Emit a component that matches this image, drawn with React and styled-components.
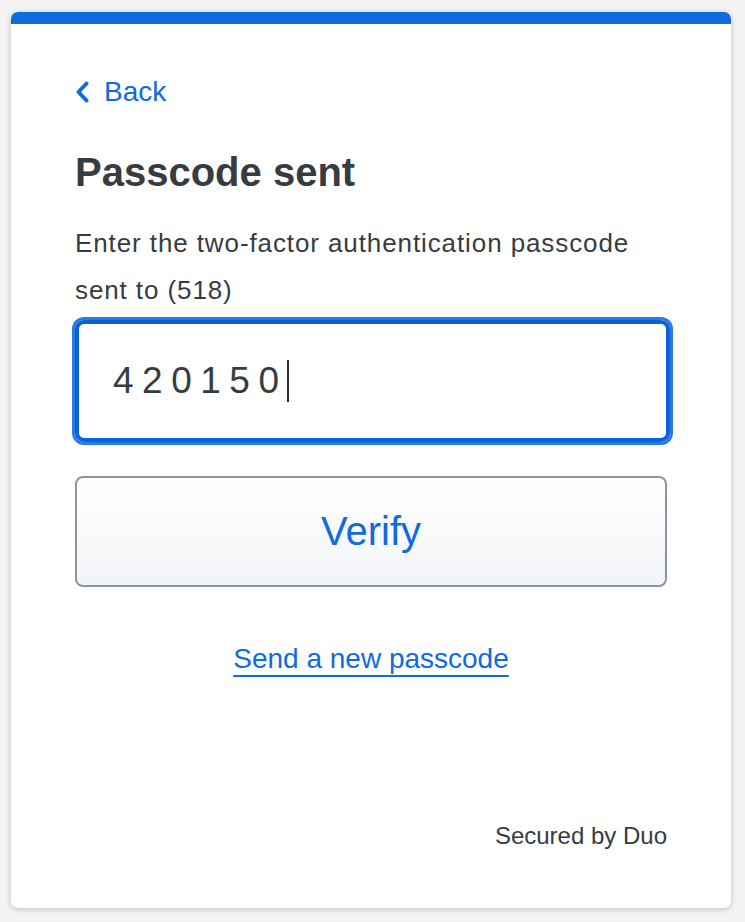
import styled, { createGlobalStyle } from "styled-components";

const GlobalStyle = createGlobalStyle`
  html, body {
    margin: 0;
    padding: 0;
    background: #f4f4f4;
  }
  body {
    font-family: "Liberation Sans", Arial, sans-serif;
    color: #373c41;
  }
`;

const Page = styled.div`
  padding: 12px 14px 14px 11px;
`;

const Card = styled.main`
  width: 720px;
  height: 896px;
  box-sizing: border-box;
  background: #fff;
  border-radius: 7px;
  overflow: hidden;
  box-shadow: 0 1px 6px rgba(0, 0, 0, 0.22);
  display: flex;
  flex-direction: column;
`;

const TopBar = styled.div`
  height: 12px;
  background: #0e6be0;
  flex-shrink: 0;
`;

const Body = styled.div`
  flex: 1;
  display: flex;
  flex-direction: column;
  padding: 53px 64px 58px 64px;
`;

const BackLink = styled.a`
  display: flex;
  align-items: center;
  gap: 15px;
  font-size: 28px;
  color: #0e6be0;
  text-decoration: none;
  cursor: pointer;
  height: 30px;
`;

const Heading = styled.h1`
  margin: 41px 0 0;
  font-size: 40px;
  font-weight: 700;
  line-height: 48px;
  color: #373c41;
`;

const Prompt = styled.p`
  margin: 24px 0 0;
  font-size: 26px;
  letter-spacing: 0.9px;
  line-height: 47px;
  color: #373c41;
`;

const Field = styled.div`
  margin-top: 6px;
  width: calc(100% + 3px);
  height: 122px;
  box-sizing: border-box;
  border: 4px solid #0a62d8;
  border-radius: 9px;
  box-shadow: 0 0 0 3px #2a79e6;
  padding: 0 34px;
  display: flex;
  align-items: center;
  font-size: 37px;
  letter-spacing: 0.23em;
  color: #373c41;
`;

const Caret = styled.span`
  display: inline-block;
  width: 2px;
  height: 42px;
  margin-left: -1px;
  background: #2a2e33;
`;

const VerifyButton = styled.button`
  margin-top: 34px;
  height: 111px;
  width: 100%;
  border: 2px solid #8b96a2;
  border-radius: 8px;
  background: linear-gradient(#ffffff, #f3f4f7);
  font-family: inherit;
  font-size: 40px;
  color: #0e6be0;
  cursor: pointer;
`;

const ResendLink = styled.a`
  align-self: center;
  margin-top: 56px;
  font-size: 28px;
  color: #0e6be0;
  text-decoration: underline;
  text-decoration-thickness: 2px;
  text-underline-offset: 7px;
  cursor: pointer;
`;

const Footer = styled.div`
  margin-top: auto;
  text-align: right;
  font-size: 24px;
  color: #373c41;
`;

const Chevron = () => (
  <svg width="14" height="22" viewBox="0 0 14 22" aria-hidden="true">
    <polyline
      points="11.5,2.5 3.5,11 11.5,19.5"
      fill="none"
      stroke="currentColor"
      strokeWidth="4"
      strokeLinecap="round"
      strokeLinejoin="round"
    />
  </svg>
);

export default function App() {
  return (
    <>
      <GlobalStyle />
      <Page>
        <Card>
          <TopBar />
          <Body>
            <BackLink>
              <Chevron />
              Back
            </BackLink>
            <Heading>Passcode sent</Heading>
            <Prompt>
              Enter the two-factor authentication passcode sent to (518)
            </Prompt>
            <Field role="textbox" aria-label="Passcode">
              420150
              <Caret />
            </Field>
            <VerifyButton type="button">Verify</VerifyButton>
            <ResendLink>Send a new passcode</ResendLink>
            <Footer>Secured by Duo</Footer>
          </Body>
        </Card>
      </Page>
    </>
  );
}
